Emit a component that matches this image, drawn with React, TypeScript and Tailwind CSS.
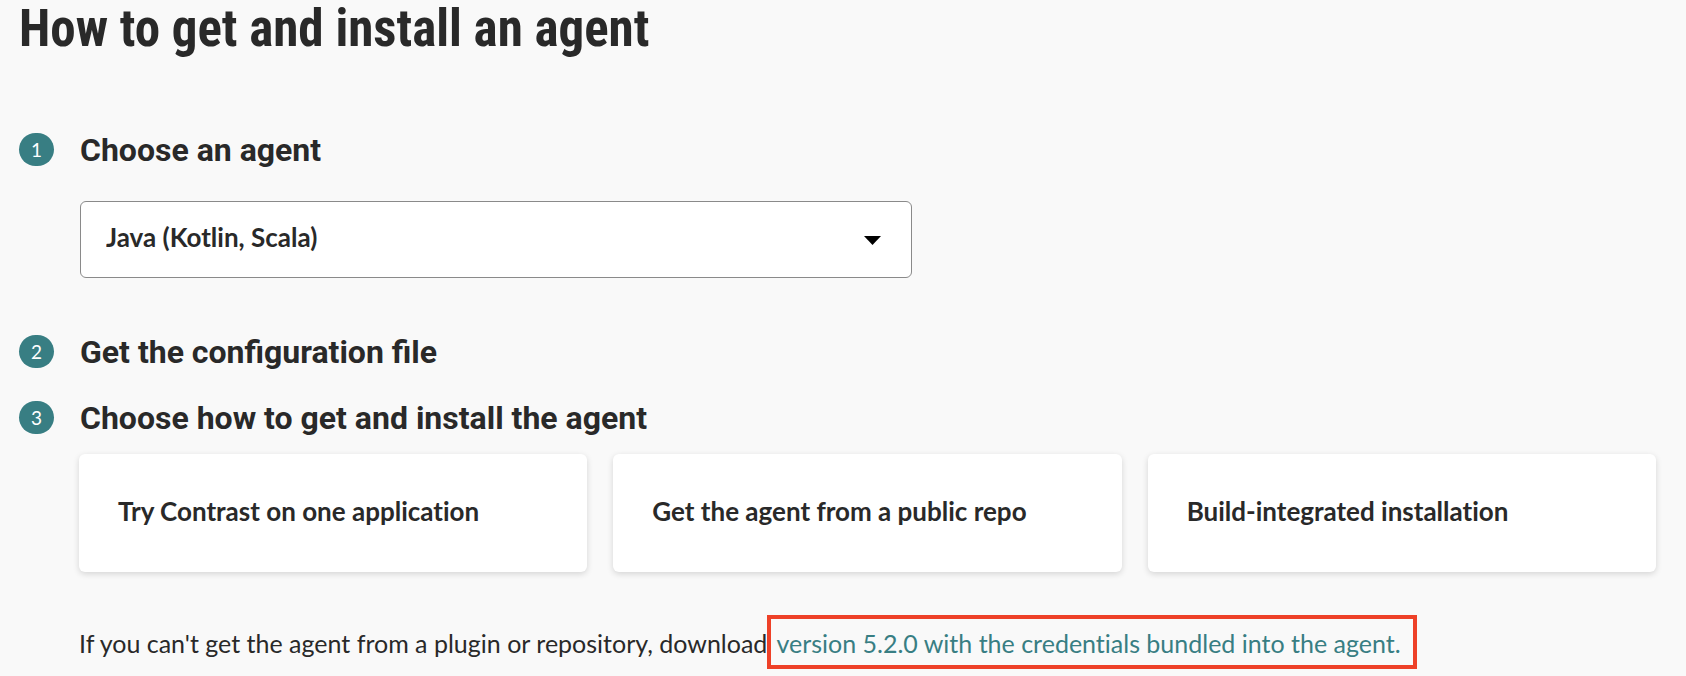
import type { ReactNode } from "react";

const options = ["Try Contrast on one application", "Get the agent from a public repo", "Build-integrated installation"];

function Step({ number, children }: { number: number; children: ReactNode }) {
  return (
    <div className="flex items-start gap-[26px]">
      <span className="mt-[3px] flex h-[33px] w-[35px] shrink-0 items-center justify-center rounded-full bg-[#387e83] text-[19px] leading-6 text-white">
        {number}
      </span>
      <h2 className="font-['Roboto',sans-serif] text-[32px] leading-10 font-bold [font-variant-ligatures:normal]">
        {children}
      </h2>
    </div>
  );
}

export default function App() {
  return (
    <main className="min-h-screen bg-[#f9f9f9] pr-[30px] pl-[19px] font-['Lato',sans-serif] text-[#292929] [font-variant-ligatures:none]">
      <h1 className="font-['Roboto_Condensed','Roboto',sans-serif] text-[51px] leading-[58px] font-bold [font-stretch:condensed]">
        How to get and install an agent
      </h1>
      <section className="pt-[72px]">
        <Step number={1}>Choose an agent</Step>
        <div className="relative mt-[31px] ml-[61px] max-w-[832px]">
          <select
            aria-label="Agent"
            className="h-[77px] w-full appearance-none rounded-md border border-[#8a8a8a] bg-white px-[25px] pb-1 text-[26px] font-bold"
          >
            <option>Java (Kotlin, Scala)</option>
          </select>
          <svg viewBox="0 0 17 9" aria-hidden="true" className="pointer-events-none absolute top-[35px] right-[31px] h-[9px] w-[17px]">
            <path d="M0 0h17L8.5 9z" />
          </svg>
        </div>
      </section>
      <section className="pt-[54px]">
        <Step number={2}>Get the configuration file</Step>
      </section>
      <section className="pt-[26px]">
        <Step number={3}>Choose how to get and install the agent</Step>
        <div className="mt-4 ml-[60px] grid grid-cols-3 gap-[26px]">
          {options.map((option) => (
            <button
              key={option}
              type="button"
              className="h-[118px] rounded-md bg-white px-[39px] pb-[3px] text-left text-[26px] font-bold shadow-[0_2px_6px_rgba(0,0,0,0.15)]"
            >
              {option}
            </button>
          ))}
        </div>
        <p className="mt-[43px] ml-[60px] flex items-baseline text-[25px] leading-8 whitespace-nowrap">
          If you can't get the agent from a plugin or repository, download
          <a href="#download" className="border-4 border-[#ee4128] pt-2 pr-3 pb-[6px] pl-[5px] text-[#387e83]">
            version 5.2.0 with the credentials bundled into the agent.
          </a>
        </p>
      </section>
    </main>
  );
}
